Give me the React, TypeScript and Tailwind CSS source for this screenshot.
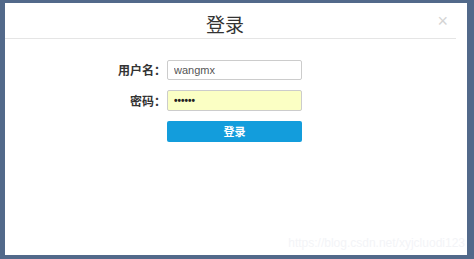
import React from "react";

const font = { fontFamily: '"Microsoft YaHei", "Noto Sans CJK SC", "Noto Sans", sans-serif' };
const latin = { fontFamily: '"Liberation Sans", sans-serif' };

export default function App() {
    return (
        <div className="w-[474px] h-[259px] bg-[#52698a] pl-[5px] pr-[7px] pt-[3px] pb-[4px] overflow-hidden" style={font}>
            <div className="relative w-full h-full bg-white flex flex-col">
                {/* HEADER */}
                <div className="h-[36px] mr-[11px] border-b border-[#e5e5e5] flex items-center justify-center pt-[6px] pr-[11px]">
                    <h1 className="text-[19px] leading-none text-[#333] font-normal">登录</h1>
                </div>
                <button className="absolute right-[19px] top-[9px] text-[18px] leading-none text-[#d4d4d4]" style={latin}>×</button>
                {/* FORM */}
                <div className="flex flex-col gap-[10px] pt-[21px]">
                    <div className="flex items-center">
                        <label className="w-[162px] text-right text-[12px] font-semibold text-[#333] pr-[1px]">用户名：</label>
                        <input
                            className="w-[135px] h-[20px] border border-[#ccc] rounded-[2px] px-[6px] text-[11px] text-[#555] outline-none"
                            style={latin}
                            defaultValue="wangmx"
                        />
                    </div>
                    <div className="flex items-center">
                        <label className="w-[162px] text-right text-[12px] font-semibold text-[#333] pr-[1px]">密码：</label>
                        <input
                            className="w-[135px] h-[21px] border border-[#ccc] rounded-[2px] px-[6px] text-[10px] font-bold text-[#222] bg-[#fbffc4] outline-none"
                            style={latin}
                            defaultValue="••••••"
                        />
                    </div>
                    <div className="flex">
                        <div className="w-[162px]" />
                        <button className="w-[135px] h-[21px] bg-[#139ddc] rounded-[2px] text-white text-[11px] font-bold">登录</button>
                    </div>
                </div>
                {/* WATERMARK */}
                <div className="absolute right-[2px] bottom-[3px] text-[12px] text-[#f3f4f7]" style={latin}>
                    https://blog.csdn.net/xyjcluodi123
                </div>
            </div>
        </div>
    );
}
